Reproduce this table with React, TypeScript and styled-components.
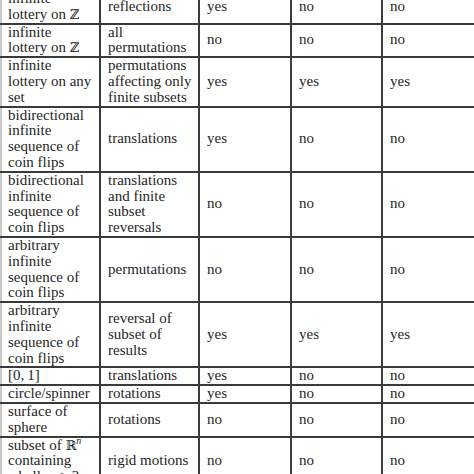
import React from 'react';
import styled, { createGlobalStyle } from 'styled-components';

const GlobalStyle = createGlobalStyle`
  html, body {
    margin: 0;
    padding: 0;
    background: #ffffff;
    overflow: hidden;
  }
`;

const Page = styled.div`
  width: 474px;
  height: 474px;
  overflow: hidden;
  background: #ffffff;
`;

const Table = styled.table`
  border-collapse: collapse;
  table-layout: fixed;
  width: 475px;
  margin-top: -11px;
  font-family: 'Liberation Serif', 'Times New Roman', 'DejaVu Serif', Times, serif;
  font-size: 15px;
  line-height: 15.8px;
  color: #262626;
`;

const Col = styled.col<{ $w: number }>`
  width: ${p => p.$w}px;
`;

const Cell = styled.td`
  border: 2px solid #3a3a3a;
  padding: 0 4px 0 7px;
  vertical-align: middle;
  white-space: nowrap;
  overflow: hidden;
`;

const LabelCell = styled(Cell)`
  border-left: 2px solid #c9c9c9;
  padding-left: 6px;
`;

const Math = styled.span`
  font-family: 'DejaVu Serif', 'DejaVu Sans', serif;
  font-size: 13px;
`;

const Sup = styled.sup`
  font-style: italic;
  font-size: 10px;
  line-height: 0;
`;

const Z = <Math>ℤ</Math>;
const R = (
  <>
    <Math>ℝ</Math>
    <Sup>n</Sup>
  </>
);

type Row = {
  set: React.ReactNode[];
  sym: React.ReactNode[];
  vals: [string, string, string];
};

const widths = [99, 99, 92, 91, 94];

const rows: Row[] = [
  { set: ['infinite', <>lottery on {Z}</>], sym: ['reflections'], vals: ['yes', 'no', 'no'] },
  { set: ['infinite', <>lottery on {Z}</>], sym: ['all', 'permutations'], vals: ['no', 'no', 'no'] },
  {
    set: ['infinite', 'lottery on any', 'set'],
    sym: ['permutations', 'affecting only', 'finite subsets'],
    vals: ['yes', 'yes', 'yes'],
  },
  {
    set: ['bidirectional', 'infinite', 'sequence of', 'coin flips'],
    sym: ['translations'],
    vals: ['yes', 'no', 'no'],
  },
  {
    set: ['bidirectional', 'infinite', 'sequence of', 'coin flips'],
    sym: ['translations', 'and finite', 'subset', 'reversals'],
    vals: ['no', 'no', 'no'],
  },
  {
    set: ['arbitrary', 'infinite', 'sequence of', 'coin flips'],
    sym: ['permutations'],
    vals: ['no', 'no', 'no'],
  },
  {
    set: ['arbitrary', 'infinite', 'sequence of', 'coin flips'],
    sym: ['reversal of', 'subset of', 'results'],
    vals: ['yes', 'yes', 'yes'],
  },
  { set: ['[0,\u20091]'], sym: ['translations'], vals: ['yes', 'no', 'no'] },
  { set: ['circle/spinner'], sym: ['rotations'], vals: ['yes', 'no', 'no'] },
  { set: ['surface of', 'sphere'], sym: ['rotations'], vals: ['no', 'no', 'no'] },
  {
    set: [<>subset of {R}</>, 'containing', <>a ball, <i>n</i> ≥ 3</>],
    sym: ['rigid motions'],
    vals: ['no', 'no', 'no'],
  },
];

const Lines: React.FC<{ lines: React.ReactNode[] }> = ({ lines }) => (
  <>
    {lines.map((line, i) => (
      <React.Fragment key={i}>
        {i > 0 && <br />}
        {line}
      </React.Fragment>
    ))}
  </>
);

const App: React.FC = () => (
  <Page>
    <GlobalStyle />
    <Table>
      <colgroup>
        {widths.map((w, i) => (
          <Col key={i} $w={w} />
        ))}
      </colgroup>
      <tbody>
        {rows.map((row, i) => (
          <tr key={i}>
            <LabelCell>
              <Lines lines={row.set} />
            </LabelCell>
            <Cell>
              <Lines lines={row.sym} />
            </Cell>
            {row.vals.map((v, j) => (
              <Cell key={j}>{v}</Cell>
            ))}
          </tr>
        ))}
      </tbody>
    </Table>
  </Page>
);

export default App;
